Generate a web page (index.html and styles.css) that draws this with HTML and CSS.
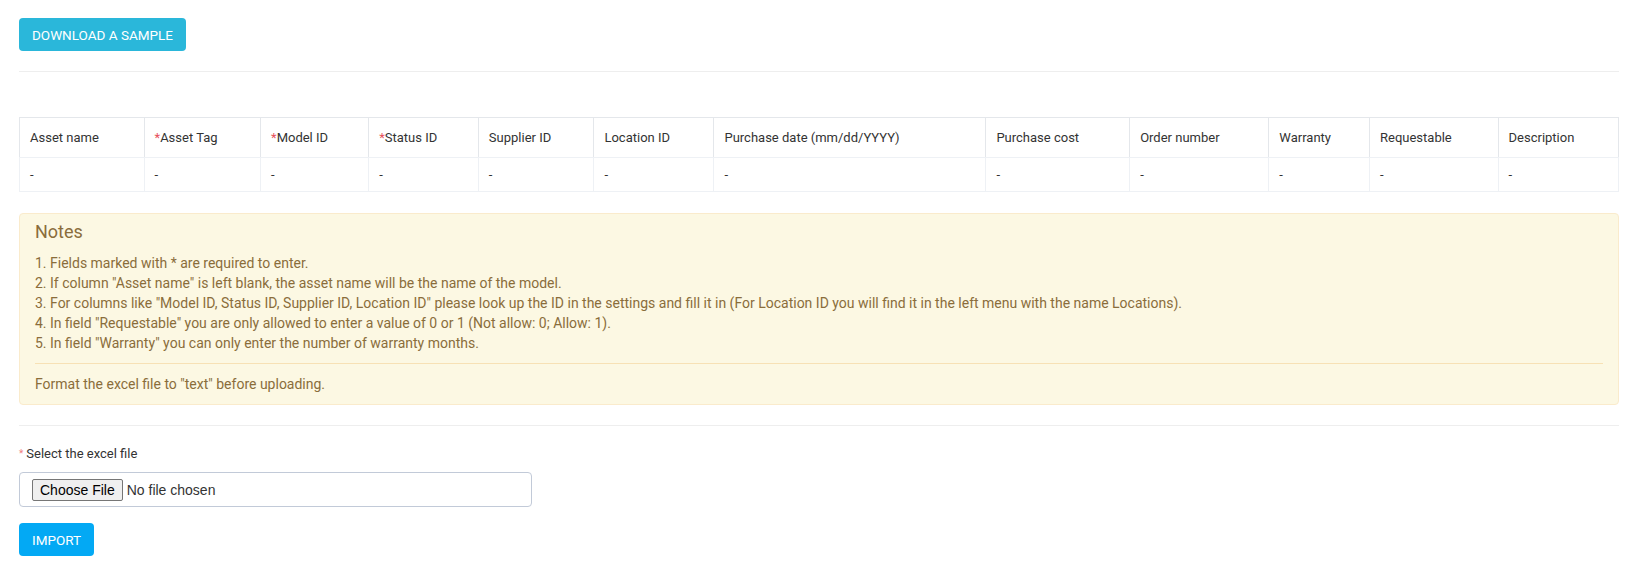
FILE: index.html
```html
<!DOCTYPE html>
<html lang="en">
<head>
<meta charset="utf-8">
<title>Import assets</title>
<link rel="stylesheet" href="styles.css">
</head>
<body>
<div class="page">
  <div class="toolbar">
    <button class="btn btn-info" type="button">Download a sample</button>
  </div>
  <hr class="sep">
  <table class="sample">
    <thead>
      <tr>
        <th>Asset name</th>
        <th><span class="req">*</span>Asset Tag</th>
        <th><span class="req">*</span>Model ID</th>
        <th><span class="req">*</span>Status ID</th>
        <th>Supplier ID</th>
        <th>Location ID</th>
        <th>Purchase date (mm/dd/YYYY)</th>
        <th>Purchase cost</th>
        <th>Order number</th>
        <th>Warranty</th>
        <th>Requestable</th>
        <th>Description</th>
      </tr>
    </thead>
    <tbody>
      <tr>
        <td>-</td><td>-</td><td>-</td><td>-</td><td>-</td><td>-</td>
        <td>-</td><td>-</td><td>-</td><td>-</td><td>-</td><td>-</td>
      </tr>
    </tbody>
  </table>
  <div class="notes">
    <h4 class="notes-title">Notes</h4>
    <div class="notes-list">
      <div>1. Fields marked with * are required to enter.</div>
      <div>2. If column "Asset name" is left blank, the asset name will be the name of the model.</div>
      <div>3. For columns like "Model ID, Status ID, Supplier ID, Location ID" please look up the ID in the settings and fill it in (For Location ID you will find it in the left menu with the name Locations).</div>
      <div>4. In field "Requestable" you are only allowed to enter a value of 0 or 1 (Not allow: 0; Allow: 1).</div>
      <div>5. In field "Warranty" you can only enter the number of warranty months.</div>
    </div>
    <hr class="notes-sep">
    <div class="notes-foot">Format the excel file to "text" before uploading.</div>
  </div>
  <hr class="sep sep-bottom">
  <form class="upload">
    <label class="field-label" for="file"><span class="req-small">*</span>Select the excel file</label>
    <div class="file-box">
      <input id="file" class="file-input" type="file">
    </div>
    <button class="btn btn-primary" type="button">Import</button>
  </form>
</div>
</body>
</html>
```

FILE: styles.css
```css
html, body {
  margin: 0;
  padding: 0;
  background: #ffffff;
}

body {
  font-family: Roboto, "Liberation Sans", Arial, sans-serif;
  color: #333333;
  font-size: 13px;
}

.page {
  padding: 18px 18px 0 19px;
}

.toolbar {
  display: flex;
}

.btn {
  display: inline-flex;
  align-items: center;
  justify-content: center;
  height: 33px;
  padding: 0 13px;
  border: 0;
  border-radius: 4px;
  color: #ffffff;
  font-family: Roboto, "Liberation Sans", Arial, sans-serif;
  font-size: 13.5px;
  text-transform: uppercase;
  cursor: pointer;
}

.btn-info {
  background: #2ab7da;
}

.btn-primary {
  background: #03a9f4;
}

.sep {
  border: 0;
  border-top: 1px solid #eeeeee;
  margin: 20px 0 45px;
  height: 0;
}

.sample {
  width: 100%;
  border-collapse: collapse;
  font-size: 13px;
  line-height: 15px;
}

.sample th,
.sample td {
  text-align: left;
  font-weight: normal;
  padding: 0 10px;
  color: #333333;
  white-space: nowrap;
}

.sample th {
  height: 39px;
  border: 1px solid #e4e7eb;
  border-bottom-color: #eef1f5;
}

.sample td {
  height: 33px;
  border: 1px solid #eef1f5;
}

.req {
  color: #e7505a;
}

.notes {
  margin-top: 21px;
  padding: 8px 15px 10px;
  background: #fcf8e3;
  border: 1px solid #faebcc;
  border-radius: 4px;
  color: #8a6d3b;
  font-size: 14px;
  line-height: 20px;
}

.notes-title {
  margin: 0 0 11px;
  font-size: 18px;
  font-weight: normal;
  line-height: 20px;
}

.notes-sep {
  border: 0;
  border-top: 1px solid #f7e1b5;
  margin: 10px 0 10px;
  height: 0;
}

.sep-bottom {
  margin: 20px 0 19px;
}

.upload {
  display: flex;
  flex-direction: column;
  align-items: flex-start;
}

.field-label {
  font-size: 13px;
  line-height: 18px;
  margin-bottom: 9px;
  color: #333333;
}

.req-small {
  color: #f08080;
  font-size: 10px;
  margin-right: 3px;
  vertical-align: 1px;
}

.file-box {
  width: 513px;
  height: 35px;
  box-sizing: border-box;
  border: 1px solid #c2cad8;
  border-radius: 4px;
  padding: 0 12px;
  display: flex;
  align-items: center;
  margin-bottom: 16px;
}

.file-input {
  font-family: "Liberation Sans", Arial, sans-serif;
  font-size: 14px;
  color: #333333;
  padding: 0;
  margin: 0;
}

.file-input::file-selector-button {
  font-family: "Liberation Sans", Arial, sans-serif;
  font-size: 14px;
  height: 22px;
  padding: 0 7px;
  margin: 0 4px 0 0;
  border: 1px solid #767676;
  border-radius: 2px;
  background: #efefef;
  color: #000000;
}
```
